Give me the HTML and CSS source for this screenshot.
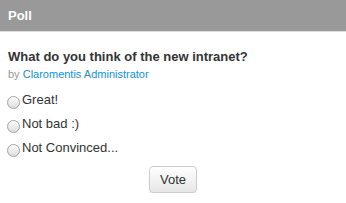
FILE: index.html
```html
<!DOCTYPE html>
<html lang="en">
<head>
    <meta charset="UTF-8">
    <title>Poll</title>
    <link rel="stylesheet" href="styles.css">
</head>
<body>
    <div class="poll">
        <div class="poll-header">Poll</div>
        <div class="poll-body">
            <h3 class="question">What do you think of the new intranet?</h3>
            <div class="author">by <a href="#">Claromentis Administrator</a></div>
            <form class="options">
                <label class="option"><span class="radio"></span>Great!</label>
                <label class="option"><span class="radio"></span>Not bad :)</label>
                <label class="option"><span class="radio"></span>Not Convinced...</label>
                <div class="actions">
                    <button type="button" class="vote-btn">Vote</button>
                </div>
            </form>
        </div>
    </div>
</body>
</html>
```

FILE: styles.css
```css
* {
    margin: 0;
    padding: 0;
    box-sizing: border-box;
}
body {
    font-family: "Liberation Sans", Arial, sans-serif;
    background: #fff;
    color: #333;
}
.poll {
    width: 346px;
}
.poll-header {
    height: 32px;
    background: #999;
    border-bottom: 1px solid #ddd;
    color: #fff;
    font-weight: bold;
    font-size: 13px;
    line-height: 31px;
    padding-left: 8px;
}
.poll-body {
    padding: 16px 8px 0 8px;
}
.question {
    font-size: 13px;
    font-weight: bold;
    color: #333;
    line-height: 18px;
}
.author {
    font-size: 11px;
    color: #999;
    line-height: 16px;
}
.author a {
    color: #1a8fd0;
    text-decoration: none;
}
.options {
    margin-top: 6px;
}
.option {
    display: flex;
    align-items: center;
    font-size: 13px;
    line-height: 24px;
    margin-left: -1px;
}
.radio {
    width: 13px;
    height: 13px;
    border-radius: 50%;
    border: 1px solid #a3a3a3;
    background: linear-gradient(#fdfdfd, #dcdcdc);
    margin-right: 2px;
    margin-top: 4px;
}
.actions {
    display: flex;
    justify-content: center;
    margin-top: 6px;
}
.vote-btn {
    font-family: inherit;
    font-size: 13px;
    color: #333;
    width: 48px;
    height: 27px;
    border: 1px solid #ccc;
    border-radius: 4px;
    background: linear-gradient(#fff, #e6e6e6);
    box-shadow: 0 1px 1px rgba(0, 0, 0, 0.1);
}
```
